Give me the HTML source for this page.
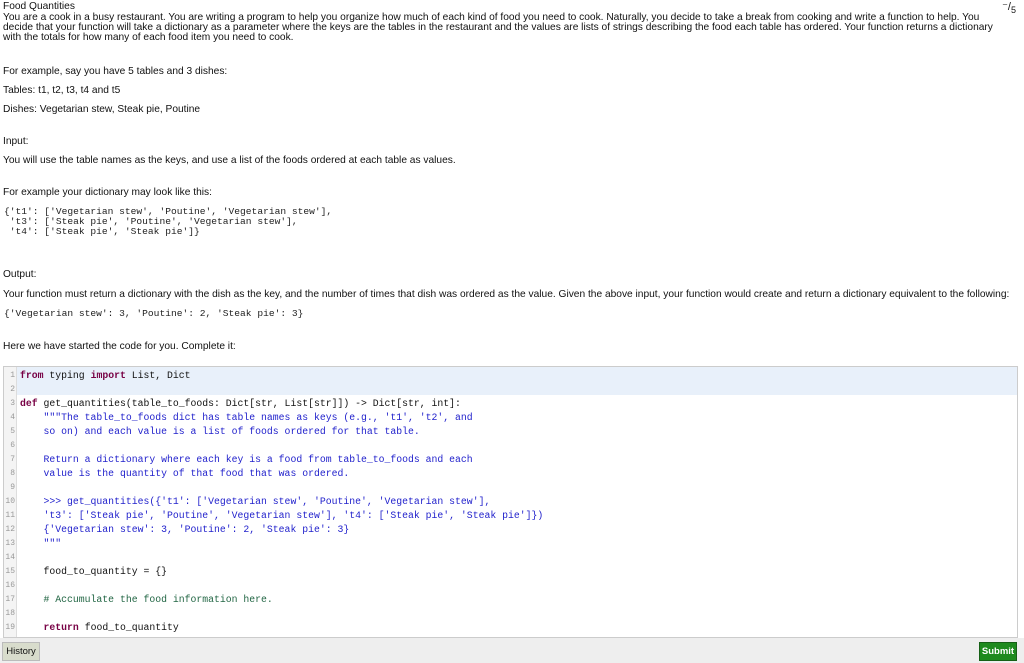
<!DOCTYPE html>
<html><head><meta charset="utf-8"><style>
body{margin:0;width:1024px;height:663px;background:#fff;position:relative;overflow:hidden;font-family:"Liberation Sans",Arial,sans-serif;font-size:10.2px;color:#111}
.t{position:absolute;left:3px;white-space:nowrap;line-height:10px;margin-top:2px}
.m{position:absolute;left:4px;white-space:pre;font-family:"Liberation Mono",monospace;font-size:9.6px;line-height:10px;color:#222;margin-top:1px}
#ed{position:absolute;left:3px;top:366px;width:1013px;height:270px;border:1px solid #ccc;background:#fff}
#hl{position:absolute;left:0;top:0;width:1013px;height:28px;background:#e8f0fa}
#gut{position:absolute;left:0;top:0;width:12px;height:270px;background:#f4f4f4;border-right:1px solid #ddd}
.ln{position:absolute;left:0;width:11px;text-align:right;font-family:"Liberation Mono",monospace;font-size:8px;color:#999;margin-top:1px}
.c{position:absolute;left:16px;white-space:pre;font-family:"Liberation Mono",monospace;font-size:9.8px;color:#111;margin-top:1px}
.k{color:#770044;font-weight:bold}.s{color:#22c}.cm{color:#264}
#foot{position:absolute;left:0;top:638px;width:1024px;height:25px;background:#eee}
</style></head><body>
<div class="t" style="top:0">Food Quantities</div>
<div style="position:absolute;right:8px;top:0;font-size:11px">⁻/<sub style="font-size:9px">5</sub></div>
<div class="t" style="top:11px">You are a cook in a busy restaurant. You are writing a program to help you organize how much of each kind of food you need to cook. Naturally, you decide to take a break from cooking and write a function to help. You</div>
<div class="t" style="top:21px">decide that your function will take a dictionary as a parameter where the keys are the tables in the restaurant and the values are lists of strings describing the food each table has ordered. Your function returns a dictionary</div>
<div class="t" style="top:31px">with the totals for how many of each food item you need to cook.</div>
<div class="t" style="top:65px">For example, say you have 5 tables and 3 dishes:</div>
<div class="t" style="top:84px">Tables: t1, t2, t3, t4 and t5</div>
<div class="t" style="top:103px">Dishes: Vegetarian stew, Steak pie, Poutine</div>
<div class="t" style="top:135px">Input:</div>
<div class="t" style="top:154px">You will use the table names as the keys, and use a list of the foods ordered at each table as values.</div>
<div class="t" style="top:186px">For example your dictionary may look like this:</div>
<div class="m" style="top:206px">{'t1': ['Vegetarian stew', 'Poutine', 'Vegetarian stew'],
 't3': ['Steak pie', 'Poutine', 'Vegetarian stew'],
 't4': ['Steak pie', 'Steak pie']}</div>
<div class="t" style="top:268px">Output:</div>
<div class="t" style="top:288px">Your function must return a dictionary with the dish as the key, and the number of times that dish was ordered as the value. Given the above input, your function would create and return a dictionary equivalent to the following:</div>
<div class="m" style="top:308px">{'Vegetarian stew': 3, 'Poutine': 2, 'Steak pie': 3}</div>
<div class="t" style="top:340px">Here we have started the code for you. Complete it:</div>
<div id="ed"><div id="hl"></div><div id="gut"></div>
<div class="ln" style="top:3px">1</div><div class="ln" style="top:17px">2</div><div class="ln" style="top:31px">3</div><div class="ln" style="top:45px">4</div><div class="ln" style="top:59px">5</div><div class="ln" style="top:73px">6</div><div class="ln" style="top:87px">7</div><div class="ln" style="top:101px">8</div><div class="ln" style="top:115px">9</div><div class="ln" style="top:129px">10</div><div class="ln" style="top:143px">11</div><div class="ln" style="top:157px">12</div><div class="ln" style="top:171px">13</div><div class="ln" style="top:185px">14</div><div class="ln" style="top:199px">15</div><div class="ln" style="top:213px">16</div><div class="ln" style="top:227px">17</div><div class="ln" style="top:241px">18</div><div class="ln" style="top:255px">19</div>
<div class="c" style="top:2px"><span class="k">from</span> typing <span class="k">import</span> List, Dict</div>
<div class="c" style="top:30px"><span class="k">def</span> get_quantities(table_to_foods: Dict[str, List[str]]) -&gt; Dict[str, int]:</div>
<div class="c s" style="top:44px">    """The table_to_foods dict has table names as keys (e.g., 't1', 't2', and</div>
<div class="c s" style="top:58px">    so on) and each value is a list of foods ordered for that table.</div>
<div class="c s" style="top:86px">    Return a dictionary where each key is a food from table_to_foods and each</div>
<div class="c s" style="top:100px">    value is the quantity of that food that was ordered.</div>
<div class="c s" style="top:128px">    &gt;&gt;&gt; get_quantities({'t1': ['Vegetarian stew', 'Poutine', 'Vegetarian stew'],</div>
<div class="c s" style="top:142px">    't3': ['Steak pie', 'Poutine', 'Vegetarian stew'], 't4': ['Steak pie', 'Steak pie']})</div>
<div class="c s" style="top:156px">    {'Vegetarian stew': 3, 'Poutine': 2, 'Steak pie': 3}</div>
<div class="c s" style="top:170px">    """</div>
<div class="c" style="top:198px">    food_to_quantity = {}</div>
<div class="c cm" style="top:226px">    # Accumulate the food information here.</div>
<div class="c" style="top:254px">    <span class="k">return</span> food_to_quantity</div>
</div>
<div id="foot"></div>
<div style="position:absolute;left:2px;top:642px;width:36px;height:17px;background:#d8dccc;border:1px solid #bbb;font-size:9.5px;line-height:17px;text-align:center">History</div>
<div style="position:absolute;left:979px;top:642px;width:36px;height:17px;background:#1e8a1e;border:1px solid #166016;color:#fff;font-size:9.5px;font-weight:bold;line-height:17px;text-align:center">Submit</div>
</body></html>
